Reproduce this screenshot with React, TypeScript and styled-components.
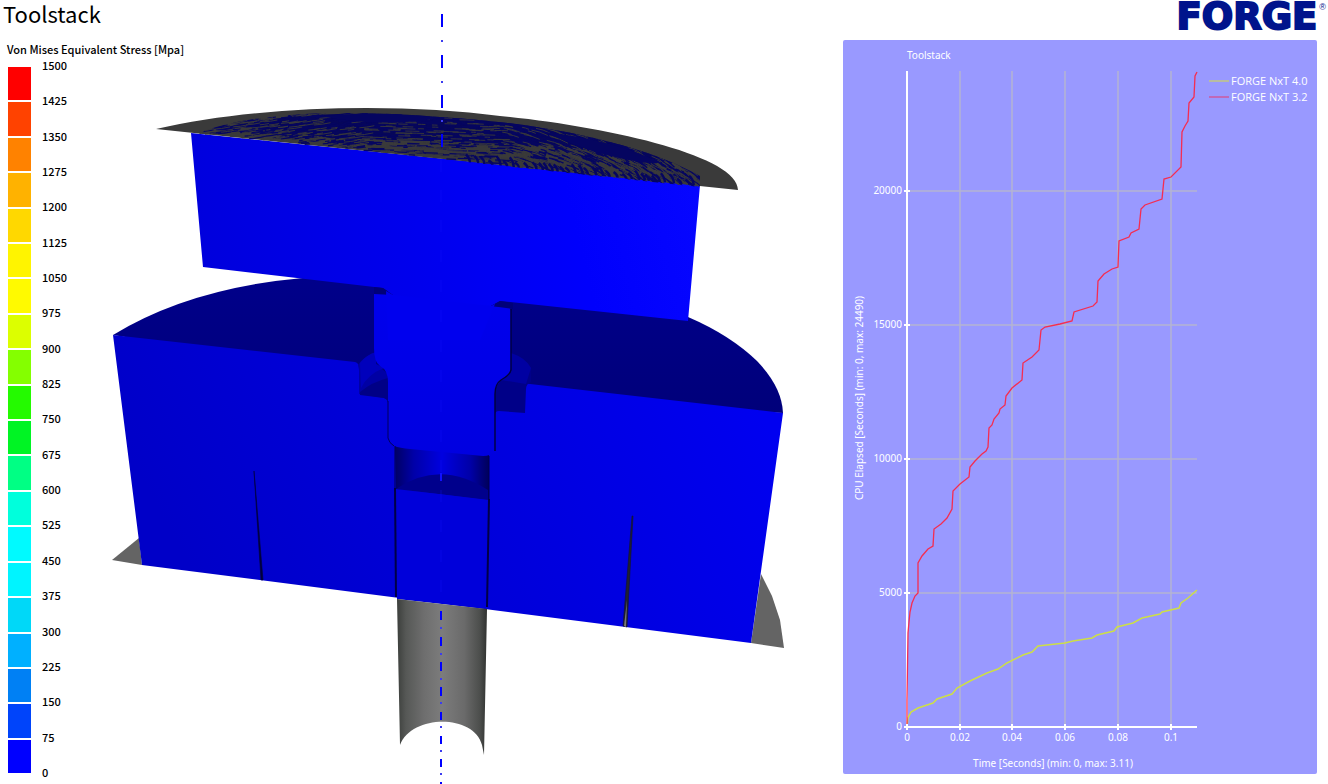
import React from "react";
import styled, { createGlobalStyle } from "styled-components";

const GlobalStyle = createGlobalStyle`
  * { box-sizing: border-box; }
  body {
    margin: 0;
    background: #ffffff;
    color: #000000;
    font-family: "Noto Sans CJK SC", "Noto Sans", sans-serif;
  }
`;

const Page = styled.div`
  display: grid;
  grid-template-columns: minmax(0, 1fr) 485px;
  min-height: 100vh;

  @media (max-width: 900px) {
    grid-template-columns: minmax(0, 1fr);
  }
`;

const Viewer = styled.main`
  display: grid;
  grid-template-columns: 112px minmax(0, 1fr);
`;

const Sidebar = styled.section`
  display: flex;
  flex-direction: column;
  padding: 0 0 11px 8px;
  white-space: nowrap;
`;

const Title = styled.h1`
  margin: 0 0 0 -5px;
  font-size: 22px;
  font-weight: 400;
  line-height: 26px;
`;

const Caption = styled.h2`
  margin: 15px 0 10px -1px;
  font-size: 11px;
  font-weight: 500;
  line-height: 16px;
`;

const Legend = styled.div`
  display: flex;
  flex: 1;
  gap: 11px;
`;

const ColorBar = styled.div`
  display: flex;
  flex-direction: column;
  width: 23px;
`;

const Swatch = styled.div<{ $color: string }>`
  flex: 1;
  background: ${(p) => p.$color};
  border-bottom: 2px solid #ffffff;

  &:last-child {
    border-bottom: 0;
  }
`;

const Scale = styled.ol`
  display: flex;
  flex-direction: column;
  justify-content: space-between;
  margin: -9px 0 -6px;
  padding: 0;
  list-style: none;
  font-size: 11px;
  font-weight: 500;
  line-height: 14px;
`;

const Scene = styled.svg`
  display: block;
  width: 100%;
  height: auto;
`;

const Aside = styled.aside`
  display: flex;
  flex-direction: column;
  padding-bottom: 10px;
`;

const Brand = styled.div`
  display: flex;
  justify-content: flex-end;
  align-items: flex-start;
  height: 40px;
  padding-right: 2px;
  color: #00148c;
`;

const Wordmark = styled.span`
  font-family: "DejaVu Sans", sans-serif;
  font-size: 37px;
  font-weight: 700;
  line-height: 34px;
  -webkit-text-stroke: 2px #00148c;
`;

const Registered = styled.span`
  margin-left: 2px;
  font-family: "Liberation Sans", sans-serif;
  font-size: 9px;
  line-height: 14px;
`;

const ChartPanel = styled.figure`
  flex: 1;
  margin: 0 11px 0 0;
  border-radius: 2px;
  background: #9999ff;
`;

const Chart = styled.svg`
  display: block;
  width: 100%;
  height: auto;
  font-family: "Noto Sans", "Open Sans", sans-serif;
  font-size: 10px;
`;

const SeriesLabel = styled.text`
  font-family: "Open Sans", "Noto Sans", sans-serif;
  font-size: 11px;
  fill: #ffffff;
`;

const swatches = [
  "#ff0000", "#ff4200", "#ff8200", "#ffb200", "#ffd800",
  "#fff400", "#fffa00", "#dcff00", "#84ff00", "#24fa00",
  "#00f424", "#00ff84", "#00ffdc", "#00faff", "#00f4ff",
  "#00d8f8", "#00b0ff", "#0080f4", "#0044fa", "#0000ff",
];

const levels = Array.from({ length: 21 }, (_, i) => 1500 - i * 75);

type Point = [number, number];

const nxt32: Point[] = [
  [0, 656], [0, 629], [1, 562], [2, 551], [3, 541], [5, 532], [8, 525], [11, 522], [11, 492],
  [15, 485], [21, 478], [26, 475], [27, 458], [34, 453], [40, 447], [45, 438], [46, 420],
  [53, 413], [62, 406], [63, 396], [68, 390], [75, 383], [79, 380], [81, 376], [82, 357],
  [85, 354], [87, 348], [92, 342], [93, 338], [98, 334], [99, 325], [105, 317], [115, 309],
  [116, 292], [125, 286], [132, 279], [134, 259], [138, 256], [153, 253], [165, 250],
  [167, 241], [186, 235], [190, 231], [191, 210], [197, 203], [205, 198], [211, 196],
  [212, 170], [222, 166], [224, 162], [232, 158], [234, 138], [238, 134], [255, 128],
  [257, 108], [264, 106], [274, 96], [275, 61], [278, 55], [281, 50], [282, 32], [287, 26],
  [288, 5], [290, 1],
];

const nxt40: Point[] = [
  [0, 656], [1, 647], [4, 641], [11, 637], [26, 632], [30, 628], [45, 623], [50, 617],
  [63, 610], [80, 602], [91, 598], [100, 592], [116, 584], [125, 581], [131, 575],
  [158, 572], [166, 570], [185, 567], [190, 564], [207, 560], [210, 556], [226, 552],
  [235, 547], [253, 543], [255, 541], [272, 537], [274, 532], [281, 527], [290, 519],
];

const xTicks = [
  { at: 0, label: "0" },
  { at: 53, label: "0.02" },
  { at: 105, label: "0.04" },
  { at: 158, label: "0.06" },
  { at: 211, label: "0.08" },
  { at: 264, label: "0.1" },
];

const yTicks = [
  { at: 656, label: "0" },
  { at: 522, label: "5000" },
  { at: 388, label: "10000" },
  { at: 254, label: "15000" },
  { at: 120, label: "20000" },
];

const toPoints = (series: Point[]) => series.map((p) => p.join(",")).join(" ");

function CpuChart() {
  return (
    <Chart viewBox="0 0 474 734" role="img" aria-label="CPU elapsed over time">
      <text x="64" y="19" fill="#fff">Toolstack</text>
      <g transform="translate(64 31)">
        {xTicks.slice(1).map((t) => (
          <path key={t.label} d={`M${t.at} 0V656`} stroke="#b4b4d2" strokeWidth="1.5" />
        ))}
        {yTicks.slice(1).map((t) => (
          <path key={t.label} d={`M0 ${t.at}H290`} stroke="#b4b4d2" strokeWidth="1.5" />
        ))}
        <path d="M0 0V656H290" fill="none" stroke="#fff" strokeWidth="2" />
        <polyline points={toPoints(nxt40)} fill="none" stroke="#cddf46" strokeWidth="1.5" />
        <polyline points={toPoints(nxt32)} fill="none" stroke="#f52d50" strokeWidth="1.3" />
        {xTicks.map((t) => (
          <g key={t.label}>
            <path d={`M${t.at} 653V659`} stroke="#fff" strokeWidth="2" />
            <text x={t.at} y="670" fill="#fff" textAnchor="middle">{t.label}</text>
          </g>
        ))}
        {yTicks.map((t) => (
          <g key={t.label}>
            <path d={`M-3 ${t.at}H3`} stroke="#fff" strokeWidth="2" />
            <text x="-5" y={t.at + 3} fill="#fff" textAnchor="end">{t.label}</text>
          </g>
        ))}
      </g>
      <text x="210" y="727" fill="#fff" textAnchor="middle">Time [Seconds] (min: 0, max: 3.11)</text>
      <text transform="translate(20 358) rotate(-90)" fill="#fff" textAnchor="middle">
        CPU Elapsed [Seconds] (min: 0, max: 24490)
      </text>
      <path d="M366 41H386" stroke="#c3c882" strokeWidth="1.5" />
      <SeriesLabel x="388" y="45">FORGE NxT 4.0</SeriesLabel>
      <path d="M366 57H386" stroke="#cd5aa0" strokeWidth="1.5" />
      <SeriesLabel x="388" y="61">FORGE NxT 3.2</SeriesLabel>
    </Chart>
  );
}

const discPath = "M156 129C260 105 400 103 500 116C610 127 738 156 738 190Z";

/* Deterministic noise so the interpenetration pattern on the disc is stable. */
function buildStreaks() {
  let seed = 17;
  const rand = () => {
    seed = (seed * 16807) % 2147483647;
    return seed / 2147483647;
  };
  let gray = "";
  let navy = "";
  for (let i = 0; i < 1900; i++) {
    const x = 195 + rand() * 505;
    const edge = 133 + (x - 191) * 0.102;
    const depth = rand();
    const y = edge - depth * 44;
    const len = 4 + rand() * 14;
    const slope = x < 360 ? -0.14 : x < 500 ? 0.03 : 0.25 + (x - 500) / 400;
    const seg = `M${x.toFixed(1)} ${y.toFixed(1)}q${(len / 2).toFixed(1)} ${(len * slope * 0.2).toFixed(1)} ${len.toFixed(1)} ${(len * slope).toFixed(1)}`;
    if (rand() < 0.54 - depth * 0.36) gray += seg;
    else navy += seg;
  }
  let teeth = "";
  for (let x = 470; x < 700; x += 4 + rand() * 5) {
    const y = 134 + (x - 191) * 0.102;
    const h = 4 + rand() * 6;
    teeth += `M${x.toFixed(1)} ${y.toFixed(1)}q0 ${(-h / 2).toFixed(1)} -4 ${(-h).toFixed(1)}`;
  }
  return { gray, navy, teeth };
}

const streaks = buildStreaks();

const axisDashes =
  "M442 14v13M442 55v13M442 95v13M442 134v13M441 611v9M441 637v9M441 662v9M441 687v9M441 712v8M441 736v8M441 759v8M441 782v2";
const axisDots =
  "M442 40v2M442 81v2M442 120v2M441 627v2M441 653v2M441 678v2M441 702v2M441 726v2M441 750v2M441 773v2";

function ToolstackScene() {
  return (
    <Scene viewBox="112 0 731 784" role="img" aria-label="Section view of the toolstack">
      <defs>
        <linearGradient id="punch" gradientUnits="userSpaceOnUse" x1="200" y1="290" x2="690" y2="170">
          <stop offset="0" stopColor="#0000dc" />
          <stop offset="0.5" stopColor="#0000f0" />
          <stop offset="0.75" stopColor="#0000fc" />
          <stop offset="1" stopColor="#0606ff" />
        </linearGradient>
        <linearGradient id="stem" x1="0" x2="0" y1="0" y2="1">
          <stop offset="0" stopColor="#0000ee" />
          <stop offset="0.4" stopColor="#0000e8" />
          <stop offset="1" stopColor="#0000e0" />
        </linearGradient>
        <linearGradient id="die" gradientUnits="userSpaceOnUse" x1="220" y1="620" x2="720" y2="340">
          <stop offset="0" stopColor="#0000c8" />
          <stop offset="0.45" stopColor="#0000da" />
          <stop offset="1" stopColor="#0000f0" />
        </linearGradient>
        <linearGradient id="dieTop" x1="0" x2="0" y1="0" y2="1">
          <stop offset="0" stopColor="#00008a" />
          <stop offset="1" stopColor="#00007a" />
        </linearGradient>
        <linearGradient id="bore" x1="0" x2="1" y1="0" y2="0">
          <stop offset="0" stopColor="#000064" />
          <stop offset="0.2" stopColor="#0000a8" />
          <stop offset="0.5" stopColor="#0000e0" />
          <stop offset="0.8" stopColor="#0000a8" />
          <stop offset="1" stopColor="#00005a" />
        </linearGradient>
        <linearGradient id="pipe" x1="0" x2="1" y1="0" y2="0">
          <stop offset="0" stopColor="#3c3f3c" />
          <stop offset="0.1" stopColor="#565856" />
          <stop offset="0.3" stopColor="#6e6e6e" />
          <stop offset="0.5" stopColor="#7c7c7c" />
          <stop offset="0.75" stopColor="#6a6a6a" />
          <stop offset="0.92" stopColor="#4c4e4c" />
          <stop offset="1" stopColor="#303230" />
        </linearGradient>
        <clipPath id="disc">
          <path d="M196 134C250 112 340 109 440 117C560 124 650 148 700 176V187Z" />
        </clipPath>
      </defs>

      <path d="M112 560L139 538L142 565Z" fill="#646464" />
      <path d="M761 574L772 596L780 620L784 648L751 643Z" fill="#646464" />

      <path
        d="M113 335Q190 288 303 278L383 280L688 317Q730 335 757 361Q782 387 783 413L525 400L360 375Z"
        fill="url(#dieTop)"
      />
      <path d="M113 335L355 362Q359 363 359 368L388 380H500L530 384L783 413L751 643L142 565Z" fill="url(#die)" />

      <path d="M358 365Q364 356 376 352V364L388 374V402Q387 399 384 398L359 394V370Z" fill="#0000a4" />
      <path d="M360 363Q366 355 376 352V364L384 368Q368 374 361 388Z" fill="#0000bc" />
      <path d="M360 392Q372 382 388 378V402Q387 399 384 398L360 395Z" fill="#000086" />
      <path d="M511 353Q526 358 531 368V382Q526 384 526 389L525 413L499 411Q495 411 495 415V388L501 380L511 372Z" fill="#000088" />
      <path d="M511 353Q526 358 531 368L526 384L501 380L511 372Z" fill="#0000a2" />

      <path d="M395 444H489V500L396 490Z" fill="url(#bore)" />
      <path d="M396 489Q440 459 488 490V500Z" fill="#00008c" />
      <path d="M396 489L489 500L487 609L397 599Z" fill="#0000da" />

      <path
        d="M374 294V348Q374 362 380 366Q388 370 388 382V438Q389 443 394 446Q400 448 410 449L483 456Q491 456 495 451V392Q496 383 504 378Q511 374 511 368V311Q511 307 506 307L492 306L393 290Z"
        fill="url(#stem)"
      />
      <path d="M511 309V370Q510 375 501 380Q495 384 495 394V451" fill="none" stroke="#00003c" strokeWidth="1.4" />
      <path d="M388 401V438Q389 443 394 446" fill="none" stroke="#00005a" />

      <path d="M191 133L700 185L688 321L500 301L491 306L440 318L393 295L383 288L203 267Z" fill="url(#punch)" />
      <path d="M374 294L393 295L383 288L374 287Z" fill="#000078" />
      <path d="M491 306L500 301L513 303V309Z" fill="#000078" />
      <path d="M386 291L393 295L491 306L495 304L480 340H388Z" fill="#0000ee" />

      <path d="M395 446V488M489 456V500" stroke="#000050" fill="none" />
      <path d="M395 488L396 597" stroke="#000046" strokeWidth="2" fill="none" />
      <path d="M489 499L487 607" stroke="#000046" strokeWidth="2" fill="none" />
      <path d="M254 471L263 580L261 580Z" fill="#00003c" stroke="#00003c" strokeWidth="0.6" />
      <path d="M632 516H633L627 627L623 626Z" fill="#202030" stroke="#101038" strokeWidth="0.6" />
      <path d="M627 600L624 626L626 627Z" fill="#787878" />

      <path d="M397 599L487 609L484 755L482 745C474 714 412 714 400 745Z" fill="url(#pipe)" />

      <path d={discPath} fill="#3a3a3a" />
      <g clipPath="url(#disc)">
        <path d="M235 124C320 110 400 112 470 117C560 124 630 143 672 162L560 146L430 141L330 138L260 128Z" fill="#06065a" />
        <path d={streaks.navy} stroke="#050560" strokeWidth="1.3" fill="none" />
        <path d={streaks.gray} stroke="#3a3a3a" strokeWidth="0.9" fill="none" />
        <path d="M320 116Q380 110 440 118Q380 128 320 116Z" fill="#050560" />
        <path d="M545 132Q610 140 650 158Q670 166 640 162Q590 154 545 132Z" fill="#050560" />
        <path d={streaks.teeth} stroke="#050560" strokeWidth="2.4" fill="none" />
      </g>

      <path d="M441 160V600" stroke="#1414ff" strokeOpacity="0.35" strokeDasharray="12 18" />
      <path d="M441 473v8" stroke="#1010ff" strokeWidth="2" />
      <path d={axisDashes} stroke="#0000ff" strokeWidth="2" />
      <path d={axisDots} stroke="#3c3cf0" strokeWidth="2" />
    </Scene>
  );
}

export default function App() {
  return (
    <>
      <GlobalStyle />
      <Page>
        <Viewer>
          <Sidebar>
            <Title>Toolstack</Title>
            <Caption>Von Mises Equivalent Stress [Mpa]</Caption>
            <Legend>
              <ColorBar>
                {swatches.map((c) => (
                  <Swatch key={c} $color={c} />
                ))}
              </ColorBar>
              <Scale>
                {levels.map((v) => (
                  <li key={v}>{v}</li>
                ))}
              </Scale>
            </Legend>
          </Sidebar>
          <ToolstackScene />
        </Viewer>
        <Aside>
          <Brand>
            <Wordmark>FORGE</Wordmark>
            <Registered>®</Registered>
          </Brand>
          <ChartPanel>
            <CpuChart />
          </ChartPanel>
        </Aside>
      </Page>
    </>
  );
}
